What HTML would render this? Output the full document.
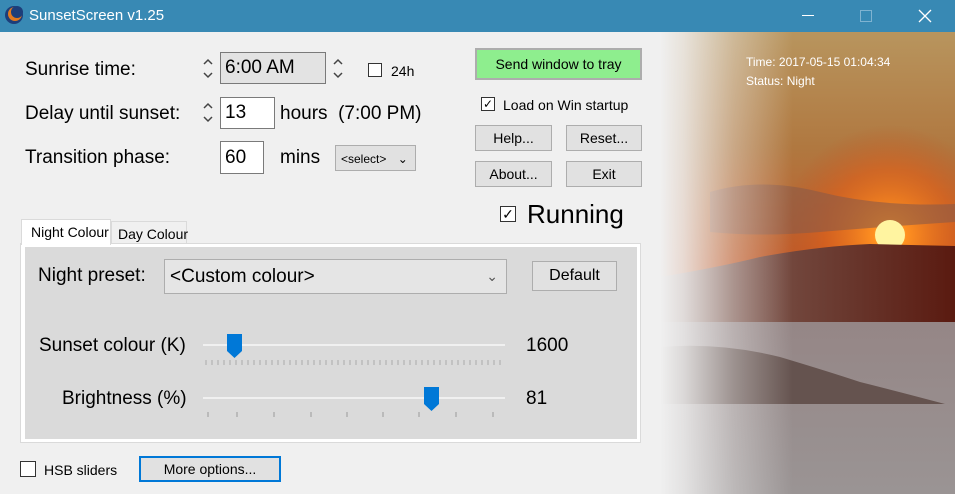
<!DOCTYPE html>
<html><head><meta charset="utf-8"><style>
*{margin:0;padding:0;box-sizing:border-box}
body{width:955px;height:494px;overflow:hidden;background:#f0f0f0;font-family:"Liberation Sans",sans-serif;color:#000;position:relative}
.a{position:absolute;white-space:nowrap}
.btn{position:absolute;background:#e1e1e1;border:1px solid #adadad;font-size:14px;text-align:center}
.cb{position:absolute;width:14px;height:14px;border:1px solid #333;background:#fff}
.big{font-size:19px}
.tb{position:absolute;background:#fff;border:1px solid #7a7a7a;font-size:19px;padding-left:4px}
</style></head><body>
<div class="a" style="left:0;top:0;width:955px;height:32px;background:#3889b4"></div>
<svg class="a" style="left:4px;top:5px" width="20" height="20" viewBox="0 0 20 20"><circle cx="10" cy="10" r="9" fill="#1c3e7a"/><circle cx="11" cy="9" r="7" fill="#e07a20"/><circle cx="13" cy="7" r="6" fill="#1c3e7a"/></svg>
<div class="a" style="left:29px;top:7px;font-size:15px;color:#fff">SunsetScreen v1.25</div>
<div class="a" style="left:802px;top:15px;width:12px;height:1px;background:#fff"></div>
<div class="a" style="left:860px;top:10px;width:12px;height:12px;border:1px solid #7fb3d1"></div>
<svg class="a" style="left:918px;top:9px" width="14" height="14"><path d="M1 1L13 13M13 1L1 13" stroke="#fff" stroke-width="1.3"/></svg>

<svg class="a" style="left:660px;top:32px" width="295" height="462" viewBox="0 0 295 462">
<defs>
<linearGradient id="sky" x1="0" y1="0" x2="0" y2="1"><stop offset="0" stop-color="#b8955e"/><stop offset="0.25" stop-color="#b07840"/><stop offset="0.5" stop-color="#c05a28"/></linearGradient>
<radialGradient id="sun" cx="230" cy="203" r="110" gradientUnits="userSpaceOnUse"><stop offset="0" stop-color="#ffe070"/><stop offset="0.15" stop-color="#ff9020"/><stop offset="0.6" stop-color="#e06018" stop-opacity="0.6"/><stop offset="1" stop-color="#c05020" stop-opacity="0"/></radialGradient>
<linearGradient id="hill" x1="0" y1="0" x2="1" y2="0"><stop offset="0" stop-color="#8a6a60"/><stop offset="0.6" stop-color="#6a3a30"/><stop offset="1" stop-color="#5a1a10"/></linearGradient>
<linearGradient id="sea" x1="0" y1="0" x2="0" y2="1"><stop offset="0" stop-color="#958686"/><stop offset="1" stop-color="#9a9494"/></linearGradient>
<linearGradient id="fade" x1="0" y1="0" x2="1" y2="0"><stop offset="0" stop-color="#f0f0f0"/><stop offset="0.08" stop-color="#f0f0f0" stop-opacity="0.85"/><stop offset="0.25" stop-color="#f0f0f0" stop-opacity="0.4"/><stop offset="0.45" stop-color="#f0f0f0" stop-opacity="0"/></linearGradient>
</defs>
<rect width="295" height="462" fill="url(#sky)"/>
<rect width="295" height="462" fill="url(#sun)"/>
<path d="M50 160 Q100 145 160 160 Q220 175 295 172 L295 190 Q220 195 160 200 Q100 205 50 200Z" fill="#8a5a48" opacity="0.6"/>
<circle cx="230" cy="203" r="15" fill="#fff4a0"/>
<path d="M0 245 Q60 235 100 225 Q160 214 210 212 L295 214 L295 290 L0 290Z" fill="url(#hill)"/>
<rect y="290" width="295" height="172" fill="url(#sea)"/>
<path d="M0 315 Q60 310 120 325 Q170 340 200 350 Q240 360 285 372 L0 372Z" fill="#65534f"/>
<rect width="295" height="462" fill="url(#fade)"/>
</svg>
<div class="a" style="left:746px;top:55px;font-size:12px;color:#fff">Time: 2017-05-15 01:04:34</div>
<div class="a" style="left:746px;top:74px;font-size:12px;color:#fff">Status: Night</div>

<svg width="0" height="0" style="position:absolute"><defs><g id="spin"><path d="M2 6L6 2L10 6M2 15L6 19L10 15" fill="none" stroke="#444" stroke-width="1.5"/></g></defs></svg>
<div class="a big" style="left:25px;top:59px">Sunrise time:</div>
<svg class="a" style="left:202px;top:58px" width="12" height="22"><use href="#spin"/></svg>
<div class="tb" style="left:220px;top:52px;width:106px;height:32px;background:#e3e3e3;padding-top:4px">6:00 AM</div>
<svg class="a" style="left:332px;top:58px" width="12" height="22"><use href="#spin"/></svg>
<div class="cb" style="left:368px;top:63px"></div>
<div class="a" style="left:391px;top:63px;font-size:14px">24h</div>

<div class="a big" style="left:25px;top:103px">Delay until sunset:</div>
<svg class="a" style="left:202px;top:102px" width="12" height="22"><use href="#spin"/></svg>
<div class="tb" style="left:220px;top:97px;width:55px;height:32px;padding-top:4px">13</div>
<div class="a big" style="left:280px;top:103px">hours &nbsp;(7:00 PM)</div>

<div class="a big" style="left:25px;top:147px">Transition phase:</div>
<div class="tb" style="left:220px;top:141px;width:44px;height:33px;padding-top:5px">60</div>
<div class="a big" style="left:280px;top:147px">mins</div>
<div class="a" style="left:335px;top:145px;width:81px;height:26px;background:#e1e1e1;border:1px solid #adadad;font-size:12px;padding:6px 0 0 5px">&lt;select&gt; <span style="margin-left:8px">⌄</span></div>

<div class="btn" style="left:475px;top:48px;width:167px;height:32px;border:2px solid #adadad;background:#8eee8e;padding-top:6px">Send window to tray</div>
<div class="cb" style="left:481px;top:97px;font-size:12px;line-height:12px;text-align:center">✓</div>
<div class="a" style="left:503px;top:97px;font-size:14px">Load on Win startup</div>
<div class="btn" style="left:475px;top:125px;width:77px;height:26px;padding-top:4px">Help...</div>
<div class="btn" style="left:566px;top:125px;width:76px;height:26px;padding-top:4px">Reset...</div>
<div class="btn" style="left:475px;top:161px;width:77px;height:26px;padding-top:4px">About...</div>
<div class="btn" style="left:566px;top:161px;width:76px;height:26px;padding-top:4px">Exit</div>
<div class="cb" style="left:500px;top:206px;width:16px;height:16px;font-size:14px;line-height:14px;text-align:center">✓</div>
<div class="a" style="left:527px;top:199px;font-size:26px">Running</div>

<div class="a" style="left:20px;top:243px;width:621px;height:200px;background:#fff;border:1px solid #dadada"></div>
<div class="a" style="left:25px;top:247px;width:612px;height:192px;background:#dadada"></div>
<div class="a" style="left:21px;top:219px;width:90px;height:26px;background:#fff;border:1px solid #dadada;border-bottom:none;font-size:14px;padding:4px 0 0 9px">Night Colour</div>
<div class="a" style="left:111px;top:221px;width:76px;height:22px;background:#f0f0f0;border:1px solid #dadada;border-bottom:none;font-size:14px;padding:4px 0 0 6px">Day Colour</div>

<div class="a big" style="left:38px;top:265px">Night preset:</div>
<div class="a" style="left:164px;top:259px;width:343px;height:35px;background:#e5e5e5;border:1px solid #adadad;font-size:19px;padding:6px 0 0 5px">&lt;Custom colour&gt;<span style="position:absolute;right:8px;top:8px;font-size:14px;color:#555">⌄</span></div>
<div class="btn" style="left:532px;top:261px;width:85px;height:30px;font-size:16px;padding-top:5px">Default</div>

<div class="a big" style="left:39px;top:335px">Sunset colour (K)</div>
<div class="a" style="left:203px;top:344px;width:302px;height:2px;background:#f0f0f0"></div>
<svg class="a" style="left:203px;top:360px" width="302" height="6"><path d="M3 0V5M9 0V5M15 0V5M21 0V5M27 0V5M33 0V5M39 0V5M45 0V5M51 0V5M57 0V5M63 0V5M69 0V5M75 0V5M81 0V5M87 0V5M93 0V5M99 0V5M105 0V5M111 0V5M117 0V5M123 0V5M129 0V5M135 0V5M141 0V5M147 0V5M153 0V5M159 0V5M165 0V5M171 0V5M177 0V5M183 0V5M189 0V5M195 0V5M201 0V5M207 0V5M213 0V5M219 0V5M225 0V5M231 0V5M237 0V5M243 0V5M249 0V5M255 0V5M261 0V5M267 0V5M273 0V5M279 0V5M285 0V5M291 0V5M297 0V5" stroke="#aaa"/></svg>
<svg class="a" style="left:227px;top:334px" width="15" height="24"><path d="M0 0H15V17L7.5 24L0 17Z" fill="#0078d7"/></svg>
<div class="a big" style="left:526px;top:335px">1600</div>

<div class="a big" style="left:62px;top:388px">Brightness (%)</div>
<div class="a" style="left:203px;top:397px;width:302px;height:2px;background:#f0f0f0"></div>
<svg class="a" style="left:203px;top:412px" width="302" height="6"><path d="M5 0V5M34 0V5M71 0V5M108 0V5M144 0V5M180 0V5M216 0V5M253 0V5M290 0V5" stroke="#999"/></svg>
<svg class="a" style="left:424px;top:387px" width="15" height="24"><path d="M0 0H15V17L7.5 24L0 17Z" fill="#0078d7"/></svg>
<div class="a big" style="left:526px;top:388px">81</div>

<div class="cb" style="left:20px;top:461px;width:16px;height:16px"></div>
<div class="a" style="left:44px;top:462px;font-size:14px">HSB sliders</div>
<div class="btn" style="left:139px;top:456px;width:142px;height:26px;border:2px solid #0078d7;padding-top:3px">More options...</div>
</body></html>
